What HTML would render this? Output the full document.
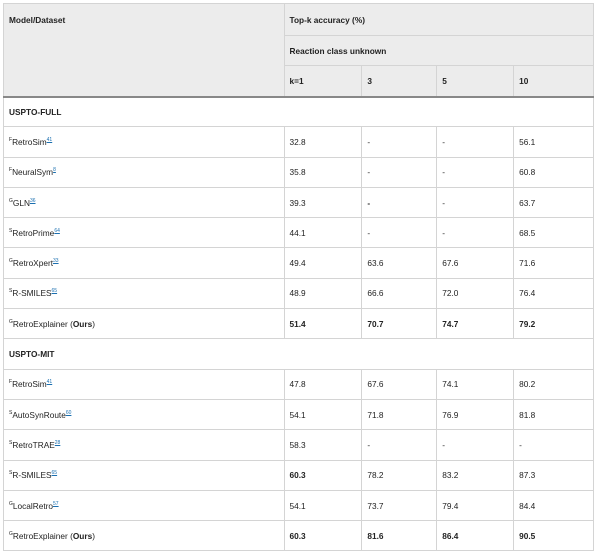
<!DOCTYPE html>
<html><head><style>
body{margin:0;background:#fff;font-family:"Liberation Sans",sans-serif;font-size:8.3px;color:#222}
table{position:absolute;left:3px;top:3px;width:591px;border-collapse:collapse;border:1px solid #ccc}
td,th{border:1px solid #d4d4d4;padding:0 0 0 5px;text-align:left;vertical-align:middle;height:30.3px;box-sizing:border-box}
th{background:#ececec;font-weight:bold}
tbody tr:first-child td{border-top:2px solid #888}
th.tl{vertical-align:top;padding-top:11px}
b{font-weight:bold}
sup{font-size:5px;vertical-align:4px}
a{color:#1a6fb0;font-size:5px;vertical-align:4px;text-decoration:underline}
</style></head><body>
<table>
<colgroup><col style="width:281px"><col style="width:78px"><col style="width:75px"><col style="width:77px"><col style="width:80px"></colgroup>
<thead>
<tr><th rowspan="3" class="tl" style="height:93px">Model/Dataset</th><th colspan="4" style="height:32px">Top-k accuracy (%)</th></tr>
<tr><th colspan="4" style="height:30px">Reaction class unknown</th></tr>
<tr><th style="height:31px">k=1</th><th>3</th><th>5</th><th>10</th></tr>
</thead>
<tbody>
<tr><td colspan="5"><b>USPTO-FULL</b></td></tr>
<tr><td><sup>F</sup>RetroSim<a>41</a></td><td>32.8</td><td>-</td><td>-</td><td>56.1</td></tr>
<tr><td><sup>F</sup>NeuralSym<a>8</a></td><td>35.8</td><td>-</td><td>-</td><td>60.8</td></tr>
<tr><td><sup>G</sup>GLN<a>36</a></td><td>39.3</td><td><b>-</b></td><td>-</td><td>63.7</td></tr>
<tr><td><sup>S</sup>RetroPrime<a>64</a></td><td>44.1</td><td>-</td><td>-</td><td>68.5</td></tr>
<tr><td><sup>G</sup>RetroXpert<a>33</a></td><td>49.4</td><td>63.6</td><td>67.6</td><td>71.6</td></tr>
<tr><td><sup>S</sup>R-SMILES<a>65</a></td><td>48.9</td><td>66.6</td><td>72.0</td><td>76.4</td></tr>
<tr><td><sup>G</sup>RetroExplainer (<b>Ours</b>)</td><td><b>51.4</b></td><td><b>70.7</b></td><td><b>74.7</b></td><td><b>79.2</b></td></tr>
<tr><td colspan="5"><b>USPTO-MIT</b></td></tr>
<tr><td><sup>F</sup>RetroSim<a>41</a></td><td>47.8</td><td>67.6</td><td>74.1</td><td>80.2</td></tr>
<tr><td><sup>S</sup>AutoSynRoute<a>60</a></td><td>54.1</td><td>71.8</td><td>76.9</td><td>81.8</td></tr>
<tr><td><sup>S</sup>RetroTRAE<a>28</a></td><td>58.3</td><td>-</td><td>-</td><td>-</td></tr>
<tr><td><sup>S</sup>R-SMILES<a>65</a></td><td><b>60.3</b></td><td>78.2</td><td>83.2</td><td>87.3</td></tr>
<tr><td><sup>G</sup>LocalRetro<a>57</a></td><td>54.1</td><td>73.7</td><td>79.4</td><td>84.4</td></tr>
<tr><td><sup>G</sup>RetroExplainer (<b>Ours</b>)</td><td><b>60.3</b></td><td><b>81.6</b></td><td><b>86.4</b></td><td><b>90.5</b></td></tr>
</tbody>
</table>
</body></html>
